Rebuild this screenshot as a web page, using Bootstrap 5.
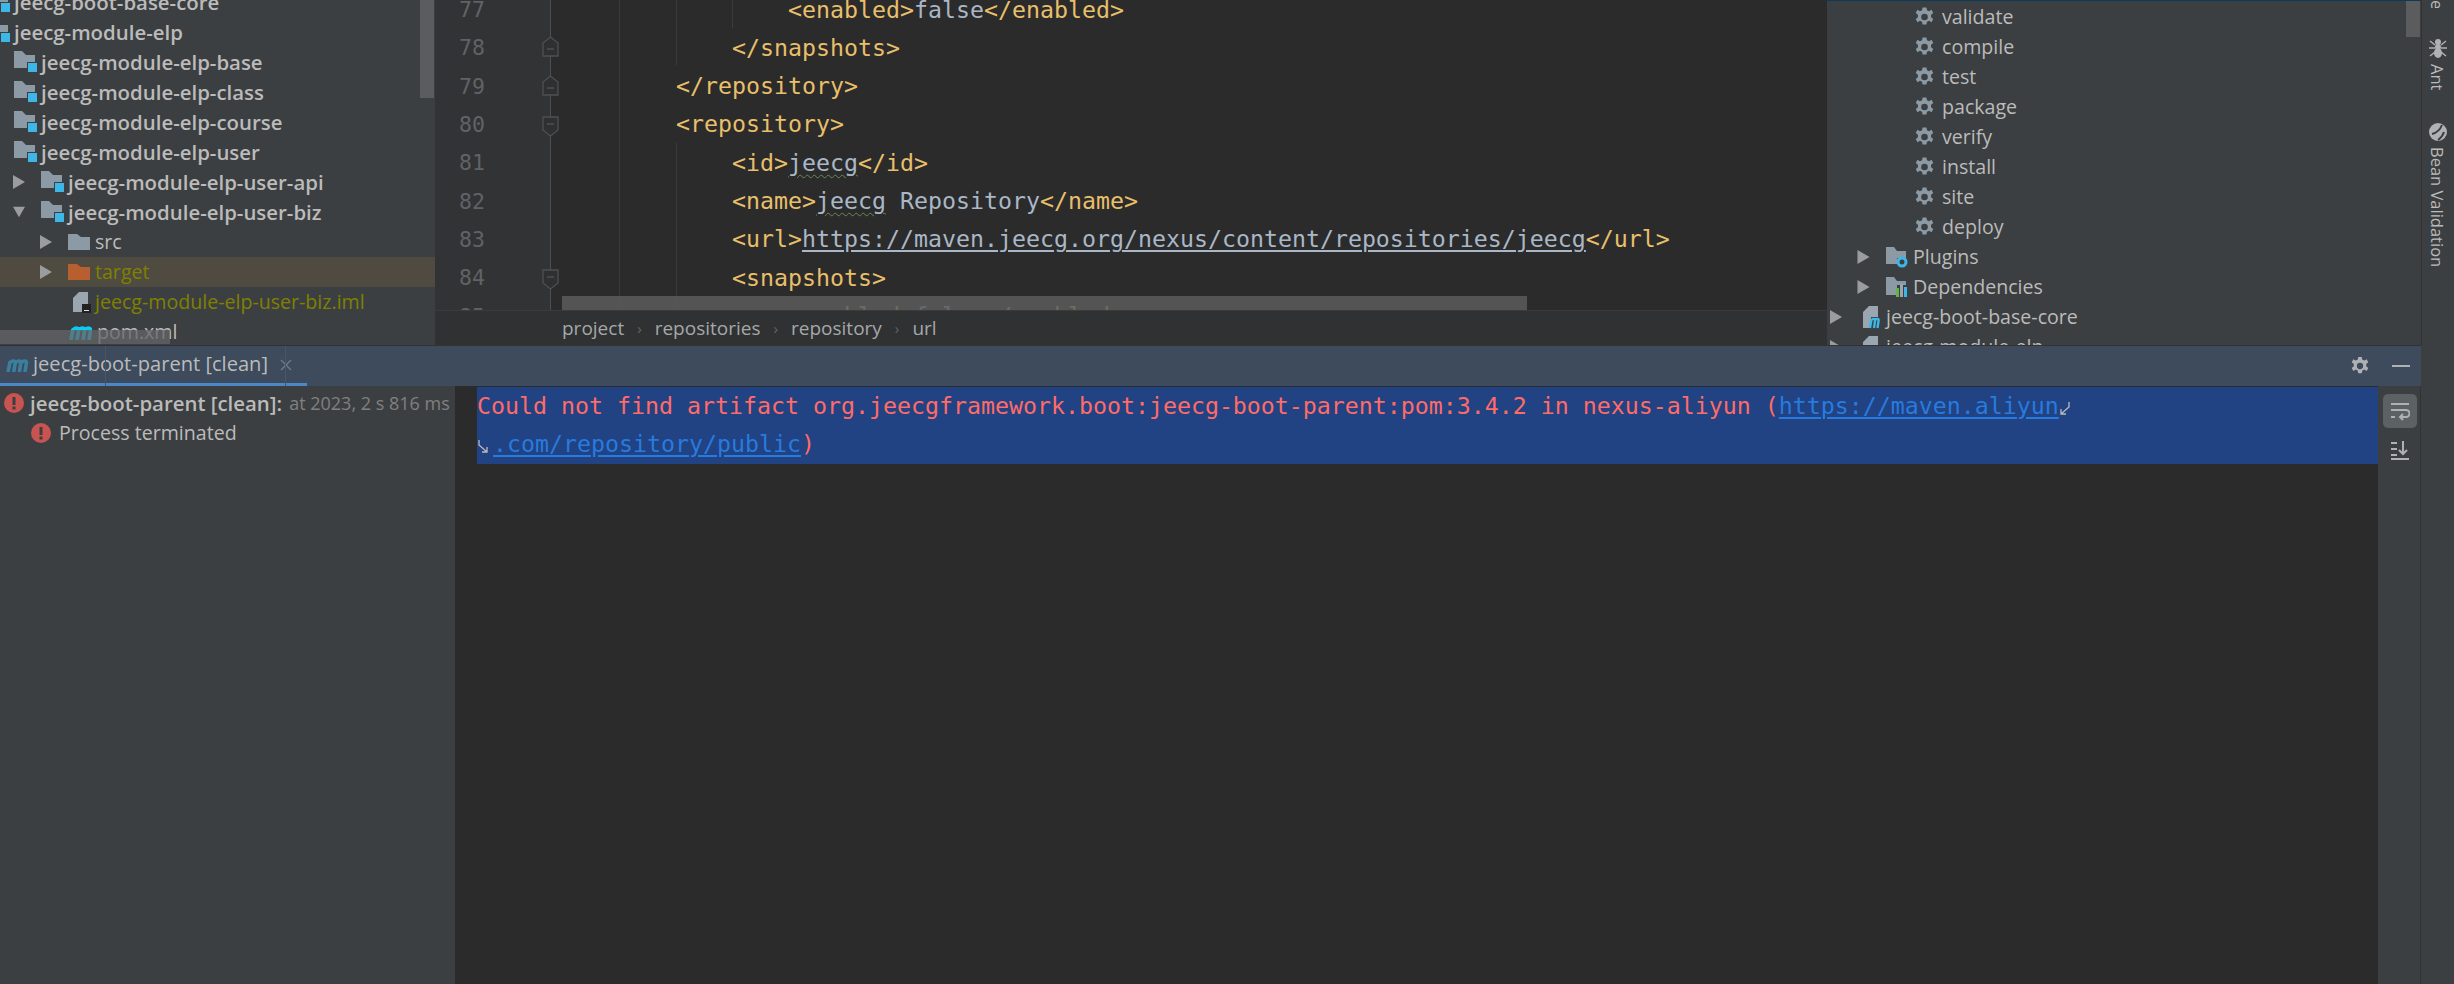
<!DOCTYPE html>
<html lang="en"><head><meta charset="utf-8"><title>IDE</title>
<link rel="stylesheet" href="https://cdn.jsdelivr.net/npm/bootstrap@5.3.0/dist/css/bootstrap.min.css">
<style>
html,body{height:984px;overflow:hidden;background:#3c3f41}
body{font-family:"Open Sans","Noto Sans",sans-serif;font-size:19.6px;color:#bbb;line-height:1}
.ide-top{height:345px}
.ide-tree{width:435px;background:#3c3f41;flex:none}
.tree-in{margin-top:-13px}
.tr{height:30px;white-space:nowrap;position:relative}
.tr svg{flex:none}
.semi{font-weight:600;font-size:20.4px}
.p1{margin-left:-13px}.p2{padding-left:14px}.p3{padding-left:13px}.p4{padding-left:40px}.p5{padding-left:72px}.p5m{padding-left:69px}
.arrow{margin-right:16px}
.p3 .arrow{margin-right:16px;width:12px}
.ic{margin-right:4px}
.ic6{margin-right:5px}
.olive{color:#808000}
.hl{background:#4f4b41}
.vbar{position:absolute;background:#5a5c5e}
.vb1{left:420px;top:0;width:14px;height:98px}
.hb1{left:0;top:330px;width:170px;height:14px;background:rgba(100,102,104,.75)}
.vb2{right:1px;top:0;width:14px;height:36px}
.ed{background:#2b2b2b;min-width:0;width:1392px;flex:none}
.ed-main{height:310px;overflow:hidden}
.gut{width:116px;flex:none;background:#313335;border-right:1px solid #4d4f51;margin-top:-9px;color:#606366;padding-left:24px}
.code{margin-top:-9.500px;padding-left:13px;min-width:0}
.gut,.code{font-family:"DejaVu Sans Mono",monospace}
.ln,.cl{height:38.33px;line-height:38.33px;font-size:23.25px;white-space:pre}
.ln{font-size:21.5px}
.cl{color:#e8bf6a}
.val{color:#a9b7c6}
.lnk{color:#a9b7c6;text-decoration:underline;text-underline-offset:3px}
.sq{text-decoration:underline wavy #6a8759 1px;text-underline-offset:3px}
.guide{position:absolute;width:1px;background:#3b3b3b}
.g1{left:184px;top:0;height:310px}
.g2{left:241px;top:0;height:65px}
.g2b{left:241px;top:143px;height:167px}
.g3{left:297px;top:0;height:28px}
.fold{position:absolute;left:107px}
.f1{top:36px}.f2{top:75px}.f3{top:116px}.f4{top:269px}
.hb2{left:127px;top:296px;width:965px;height:14px;background:rgba(92,92,92,.85)}
.crumb{height:35px;background:#2f3132;border-top:1px solid #3a3b3c;padding-left:127px;color:#a5a8aa;font-size:19px}
.crumb i{font-style:normal;color:#63666a;margin:0 13px;font-size:15px}
.mvn{width:594px;flex:none;background:#3c3f41;border-top:1px solid #0e3a5a;padding-top:1px;position:relative;overflow:hidden}
.mg{color:#8c9aa5;margin-right:8px}
.m3{padding-left:88px}.m2{padding-left:30px}.m1{padding-left:3px}
.m2 .arrow{margin-right:16px}.m1 .arrow{margin-right:20px}
.strip{flex:1;border-left:1px solid #323232;background:#3c3f41;min-width:0}
.tabs{height:41px;background:#3d4b5c;border-top:1px solid #323232;width:2421px;position:relative}
.tab{width:307px;height:40px;border-bottom:3px solid #4a88c7;padding-left:5px;flex:none;font-size:20.1px}
.ghost{position:absolute;top:0;bottom:0;width:1px;background:#485665}
.gh1{left:105px}.gh2{left:285px}
.spacer{flex:1}
.tg{color:#afb1b3;margin-right:23px}
.tm{margin-right:11px}
.bot{height:598px}
.runs{width:455px;flex:none;background:#3c3f41;padding-top:2px}
.rr{height:30px;white-space:nowrap}
.rr1{padding-left:4px}.rr2{padding-left:31px}
.me6{margin-right:6px}
.muted{color:#808080;font-size:18px;font-weight:400;margin-left:7px}
.cons{width:1923px;flex:none;background:#2b2b2b;padding-left:22px}
.sel{background:#214283;font-family:"DejaVu Sans Mono",monospace;font-size:23.25px;line-height:38.4px;height:77px;padding-top:0;color:#ff6b68;white-space:pre;width:1901px;margin-top:1px}
.sel a{color:#287bde;text-decoration:underline;text-underline-offset:3px}
.side{width:43px;flex:none;background:#3c3f41;border-right:1px solid #323232;padding:8px 0 0 5px}
.tb-on{width:34px;height:34px;background:#5c6164;border-radius:5px}
.tb-off{width:34px;height:34px;margin-top:5px}
.vt{writing-mode:vertical-rl;font-size:16.5px;color:#bbb;white-space:nowrap;margin-left:6px}
.v0{margin-top:0;height:8px;overflow:hidden}
.sic{display:block;margin:30px 0 0 7px}
.sic2{display:block;margin:32px 0 0 7px}
.v1b{margin-top:6px}.v2b{margin-top:5px}
</style></head>
<body>
<svg width="0" height="0" class="position-absolute">
<defs>
<symbol id="mod" viewBox="0 0 23 24"><path fill="#8c9aa5" d="M0 1h8l4 4h9v13H0z"/><rect x="13" y="12" width="10" height="10" fill="#3c3f41"/><rect x="14" y="13" width="9" height="9" fill="#3db7e8"/></symbol>
<symbol id="fol" viewBox="0 0 22 16"><path fill="#8c9aa5" d="M0 0h9l4 3h9v13H0z"/></symbol>
<symbol id="ofol" viewBox="0 0 22 16"><path fill="#b85f30" d="M0 0h9l4 3h9v13H0z"/></symbol>
<symbol id="gear" viewBox="0 0 20 20"><path fill="currentColor" fill-rule="evenodd" d="M8 0h4l.6 3 2.200 1 2.600-1.600 1.800 3.400-2.300 1.900v2.600l2.300 1.900-1.800 3.400-2.600-1.600-2.200 1-.6 3H8l-.6-3-2.200-1-2.600 1.600-1.800-3.400 2.300-1.900V7.700L.8 5.800l1.800-3.400 2.600 1.600 2.200-1zM10 6.500a3.500 3.500 0 1 0 0 7 3.500 3.500 0 0 0 0-7z"/></symbol>
<symbol id="err" viewBox="0 0 20 20"><circle cx="10" cy="10" r="10" fill="#c75450"/><rect x="8.500" y="4" width="3" height="8" fill="#3c3f41"/><rect x="8.500" y="13.500" width="3" height="3" fill="#3c3f41"/></symbol>
<symbol id="rt" viewBox="0 0 12 14"><path fill="#9a9c9e" d="M0 0l12 7-12 7z"/></symbol>
<symbol id="dn" viewBox="0 0 14 12"><path fill="#9a9c9e" d="M0 0h14L7 12z"/></symbol>
<symbol id="fm" viewBox="0 0 17 21"><path fill="#2e3031" stroke="#4e5052" stroke-width="1.300" d="M1 1h15v13l-7.500 6L1 14zM5 8h7"/></symbol>
<symbol id="fc" viewBox="0 0 17 21"><path fill="#2e3031" stroke="#4e5052" stroke-width="1.300" d="M1 20h15V7L8.500 1 1 7zM5 13h7"/></symbol>
<symbol id="mm" viewBox="0 0 23 16"><path fill="none" stroke="currentColor" stroke-width="3.800" d="M2 16l2-11M4 6c3-3 6-2 5.500 1L8 16M10 6c3-3 6-2 5.500 1L14 16M16 6c3-3 6-2 5.500 1L20 16"/></symbol>
</defs>
</svg>
<div class="ide-top d-flex position-relative">
  <div class="ide-tree overflow-hidden position-relative">
    <div class="tree-in">
      <div class="tr d-flex align-items-center semi p1"><svg class="ic" width="23" height="24"><use href="#mod"/></svg>jeecg-boot-base-core</div>
      <div class="tr d-flex align-items-center semi p1"><svg class="ic" width="23" height="24"><use href="#mod"/></svg>jeecg-module-elp</div>
      <div class="tr d-flex align-items-center semi p2"><svg class="ic" width="23" height="24"><use href="#mod"/></svg>jeecg-module-elp-base</div>
      <div class="tr d-flex align-items-center semi p2"><svg class="ic" width="23" height="24"><use href="#mod"/></svg>jeecg-module-elp-class</div>
      <div class="tr d-flex align-items-center semi p2"><svg class="ic" width="23" height="24"><use href="#mod"/></svg>jeecg-module-elp-course</div>
      <div class="tr d-flex align-items-center semi p2"><svg class="ic" width="23" height="24"><use href="#mod"/></svg>jeecg-module-elp-user</div>
      <div class="tr d-flex align-items-center semi p3"><svg class="arrow" width="12" height="14"><use href="#rt"/></svg><svg class="ic" width="23" height="24"><use href="#mod"/></svg>jeecg-module-elp-user-api</div>
      <div class="tr d-flex align-items-center semi p3"><svg class="arrow" width="14" height="12"><use href="#dn"/></svg><svg class="ic" width="23" height="24"><use href="#mod"/></svg>jeecg-module-elp-user-biz</div>
      <div class="tr d-flex align-items-center p4"><svg class="arrow" width="12" height="14"><use href="#rt"/></svg><svg class="ic6" width="22" height="16"><use href="#fol"/></svg>src</div>
      <div class="tr d-flex align-items-center p4 hl olive"><svg class="arrow" width="12" height="14"><use href="#rt"/></svg><svg class="ic6" width="22" height="16"><use href="#ofol"/></svg>target</div>
      <div class="tr d-flex align-items-center p5 olive"><svg class="ic" width="19" height="22" viewBox="0 0 19 22"><path fill="#9aa7b0" d="M7 1h9v20H1V7z"/><rect x="10" y="13" width="9" height="9" fill="#222"/><rect x="12" y="19" width="5" height="1" fill="#ddd"/></svg><span>jeecg-module-elp-user-biz.iml</span></div>
      <div class="tr d-flex align-items-center p5m"><svg class="ic6 text-info" width="23" height="16"><use href="#mm"/></svg>pom.xml</div>
    </div>
    <div class="vbar vb1"></div>
    <div class="vbar hb1"></div>
  </div>
  <div class="ed d-flex flex-column position-relative overflow-hidden">
    <div class="ed-main d-flex position-relative">
      <div class="gut">
        <div class="ln">77</div><div class="ln">78</div><div class="ln">79</div><div class="ln">80</div><div class="ln">81</div><div class="ln">82</div><div class="ln">83</div><div class="ln">84</div><div class="ln">85</div>
      </div>
      <div class="code flex-grow-1">
<div class="cl">                &lt;enabled&gt;<span class="val">false</span>&lt;/enabled&gt;</div>
<div class="cl">            &lt;/snapshots&gt;</div>
<div class="cl">        &lt;/repository&gt;</div>
<div class="cl">        &lt;repository&gt;</div>
<div class="cl">            &lt;id&gt;<span class="val sq">jeecg</span>&lt;/id&gt;</div>
<div class="cl">            &lt;name&gt;<span class="val sq">jeecg</span><span class="val"> Repository</span>&lt;/name&gt;</div>
<div class="cl">            &lt;url&gt;<span class="lnk">https://maven.jeecg.org/nexus/content/repositories/jeecg</span>&lt;/url&gt;</div>
<div class="cl">            &lt;snapshots&gt;</div>
<div class="cl">                &lt;enabled&gt;<span class="val">false</span>&lt;/enabled&gt;</div>
      </div>
      <span class="guide g1"></span><span class="guide g2"></span><span class="guide g2b"></span><span class="guide g3"></span>
      <svg class="fold f1" width="17" height="21"><use href="#fc"/></svg>
      <svg class="fold f2" width="17" height="21"><use href="#fc"/></svg>
      <svg class="fold f3" width="17" height="21"><use href="#fm"/></svg>
      <svg class="fold f4" width="17" height="21"><use href="#fm"/></svg>
      <div class="vbar hb2"></div>
    </div>
    <div class="crumb d-flex align-items-center"><span>project</span><i>›</i><span>repositories</span><i>›</i><span>repository</span><i>›</i><span>url</span></div>
  </div>
  <div class="mvn">
    <div class="tr d-flex align-items-center m3"><svg class="mg" width="19" height="20"><use href="#gear"/></svg>validate</div>
    <div class="tr d-flex align-items-center m3"><svg class="mg" width="19" height="20"><use href="#gear"/></svg>compile</div>
    <div class="tr d-flex align-items-center m3"><svg class="mg" width="19" height="20"><use href="#gear"/></svg>test</div>
    <div class="tr d-flex align-items-center m3"><svg class="mg" width="19" height="20"><use href="#gear"/></svg>package</div>
    <div class="tr d-flex align-items-center m3"><svg class="mg" width="19" height="20"><use href="#gear"/></svg>verify</div>
    <div class="tr d-flex align-items-center m3"><svg class="mg" width="19" height="20"><use href="#gear"/></svg>install</div>
    <div class="tr d-flex align-items-center m3"><svg class="mg" width="19" height="20"><use href="#gear"/></svg>site</div>
    <div class="tr d-flex align-items-center m3"><svg class="mg" width="19" height="20"><use href="#gear"/></svg>deploy</div>
    <div class="tr d-flex align-items-center m2"><svg class="arrow" width="13" height="14"><use href="#rt"/></svg><svg class="ic6" width="22" height="22" viewBox="0 0 22 22"><path fill="#8c9aa5" d="M0 1h8l3 4h9v7h-9v6H0z"/><circle cx="16" cy="16" r="4" fill="none" stroke="#3db7e8" stroke-width="3"/></svg>Plugins</div>
    <div class="tr d-flex align-items-center m2"><svg class="arrow" width="13" height="14"><use href="#rt"/></svg><svg class="ic6" width="22" height="22" viewBox="0 0 22 22"><path fill="#8c9aa5" d="M0 1h8l3 4h9v4h-9v10H0z"/><rect x="10" y="12" width="3" height="9" fill="#62b543"/><rect x="14" y="8" width="3" height="13" fill="#9aa7b0"/><rect x="18" y="11" width="3" height="10" fill="#3db7e8"/></svg>Dependencies</div>
    <div class="tr d-flex align-items-center m1"><svg class="arrow" width="12" height="14"><use href="#rt"/></svg><svg class="ic" width="20" height="24" viewBox="0 0 20 24"><path fill="#9aa7b0" d="M7 1h9v11H9v11H1V7z"/><path fill="none" stroke="#3db7e8" stroke-width="2.400" d="M8 23l1.500-9M9.500 15c2-2 4-1 3.500 1L12 23M13 15c2-2 4-1 3.500 1L15.500 23"/></svg>jeecg-boot-base-core</div>
    <div class="tr d-flex align-items-center m1"><svg class="arrow" width="12" height="14"><use href="#rt"/></svg><svg class="ic" width="20" height="24" viewBox="0 0 20 24"><path fill="#9aa7b0" d="M7 1h9v11H9v11H1V7z"/></svg>jeecg-module-elp</div>
    <div class="vbar vb2"></div>
  </div>
  <div class="strip overflow-hidden">
    <div class="vt v0">e</div>
    <svg class="sic" width="18" height="20" viewBox="0 0 18 20"><ellipse cx="9" cy="4" rx="3" ry="3" fill="#afb1b3"/><ellipse cx="9" cy="9" rx="3" ry="3" fill="#afb1b3"/><ellipse cx="9" cy="15" rx="4" ry="5" fill="#afb1b3"/><path stroke="#afb1b3" stroke-width="1.500" fill="none" d="M1 3l5 4M17 3l-5 4M0 10h6M18 10h-6M1 18l5-4M17 18l-5-4"/></svg>
    <div class="vt v1b">Ant</div>
    <svg class="sic2" width="18" height="20" viewBox="0 0 18 20"><circle cx="9" cy="10" r="9" fill="#afb1b3"/><path d="M3 12c4-1 8-4 10-9M9 18c3-2 5-5 6-8" stroke="#3c3f41" stroke-width="2" fill="none"/></svg>
    <div class="vt v2b">Bean Validation</div>
  </div>
</div>
<div class="tabs d-flex align-items-center">
  <div class="tab d-flex align-items-center gap-1"><svg width="24" height="15" style="color:#3a7f9e"><use href="#mm"/></svg><span>jeecg-boot-parent [clean]</span><svg class="ms-2" width="12" height="12" viewBox="0 0 12 12"><path d="M1 1l10 10M11 1L1 11" stroke="#6f7b88" stroke-width="1.400"/></svg></div>
  <span class="ghost gh1"></span><span class="ghost gh2"></span>
  <div class="spacer"></div>
  <svg width="18" height="18" class="tg"><use href="#gear"/></svg>
  <svg width="18" height="3" class="tm" viewBox="0 0 18 3"><rect width="18" height="2" fill="#afb1b3"/></svg>
</div>
<div class="bot d-flex">
  <div class="runs">
    <div class="rr d-flex align-items-center rr1"><svg class="me6" width="20" height="20"><use href="#err"/></svg><span class="semi">jeecg-boot-parent [clean]:</span><span class="muted">at 2023, 2 s 816 ms</span></div>
    <div class="rr d-flex align-items-center rr2"><svg class="me-2" width="20" height="20"><use href="#err"/></svg>Process terminated</div>
  </div>
  <div class="cons"><div class="sel">Could not find artifact org.jeecgframework.boot:jeecg-boot-parent:pom:3.4.2 in nexus-aliyun (<a href="#">https://maven.aliyun</a><svg width="12" height="16" viewBox="0 0 12 16"><path d="M10 2v5L2 14M2 9v5h5" stroke="#bbb" stroke-width="1.300" fill="none"/></svg>
<svg width="12" height="16" viewBox="0 0 12 16" class="me-1"><path d="M2 2v5l8 7M10 9v5H5" stroke="#bbb" stroke-width="1.300" fill="none"/></svg><a href="#">.com/repository/public</a>)</div></div>
  <div class="side">
    <div class="tb-on d-flex align-items-center justify-content-center"><svg width="20" height="20" viewBox="0 0 20 20"><path d="M1 3h18M1 9h15a3 3 0 0 1 0 7h-6M13 13l-3 3 3 3M1 16h4" stroke="#afb1b3" stroke-width="2" fill="none"/></svg></div>
    <div class="tb-off d-flex align-items-center justify-content-center"><svg width="20" height="20" viewBox="0 0 20 20"><path d="M1 3h6M1 9h6M1 15h6M1 19h18M13 1v12M9 10l4 4 4-4" stroke="#afb1b3" stroke-width="2" fill="none"/></svg></div>
  </div>
</div>
<script src="https://cdn.jsdelivr.net/npm/bootstrap@5.3.0/dist/js/bootstrap.bundle.min.js"></script>
</body></html>
